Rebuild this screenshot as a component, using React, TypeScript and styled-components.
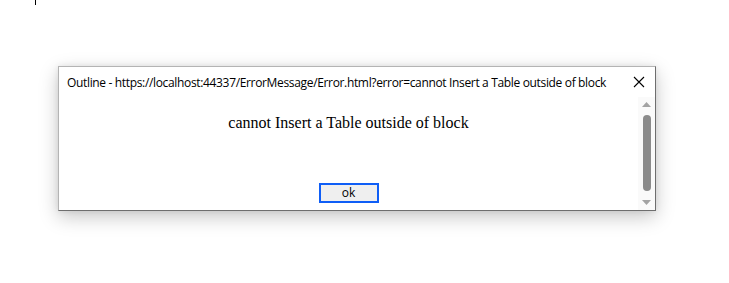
import styled, { createGlobalStyle } from 'styled-components'

const GlobalStyle = createGlobalStyle`
  html, body {
    margin: 0;
    padding: 0;
    background: #ffffff;
  }
`

const Page = styled.div({
  width: 729,
  height: 283,
  background: '#ffffff',
  display: 'flex',
  flexDirection: 'column',
})

const Caret = styled.div({
  marginLeft: 35,
  width: 1,
  height: 5,
  background: '#000000',
})

const Dialog = styled.div({
  marginTop: 61,
  marginLeft: 58,
  width: 598,
  height: 145,
  boxSizing: 'border-box',
  borderStyle: 'solid',
  borderWidth: 1,
  borderColor: '#b4b4b4 #6e6e6e #6e6e6e #b4b4b4',
  background: '#ffffff',
  boxShadow: '0 6px 18px rgba(0, 0, 0, 0.22), 0 0 6px rgba(0, 0, 0, 0.08)',
  display: 'flex',
  flexDirection: 'column',
})

const TitleBar = styled.div({
  height: 30,
  display: 'flex',
  alignItems: 'center',
  justifyContent: 'space-between',
  paddingLeft: 8,
  paddingRight: 10,
  fontFamily: '"Open Sans", "Noto Sans", sans-serif',
  fontSize: 12,
  color: '#000000',
  whiteSpace: 'nowrap',
})

const Title = styled.span({
  letterSpacing: -0.34,
})

const Close = styled.svg({
  width: 12,
  height: 12,
  flexShrink: 0,
})

const Body = styled.div({
  flex: 1,
  display: 'flex',
  minHeight: 0,
})

const Content = styled.div({
  flex: 1,
  display: 'flex',
  flexDirection: 'column',
  alignItems: 'center',
  paddingTop: 16,
})

const Message = styled.div({
  fontFamily: '"Liberation Serif", "Times New Roman", serif',
  fontSize: 16,
  color: '#000000',
  lineHeight: '20px',
})

const OkButton = styled.button({
  marginTop: 50,
  width: 60,
  height: 20,
  boxSizing: 'border-box',
  border: '2px solid #0f5ef6',
  background: '#efefef',
  fontFamily: '"Open Sans", "Noto Sans", sans-serif',
  fontSize: 12,
  lineHeight: '14px',
  color: '#000000',
  padding: 0,
})

const ScrollBar = styled.div({
  width: 17,
  background: '#fafafa',
  display: 'flex',
  flexDirection: 'column',
  alignItems: 'center',
})

const ArrowBox = styled.div({
  height: 15,
  width: '100%',
  display: 'flex',
  alignItems: 'center',
  justifyContent: 'center',
})

const Thumb = styled.div({
  marginTop: 3,
  width: 8,
  height: 76,
  borderRadius: 4,
  background: '#8b8b8b',
})

const Track = styled.div({
  flex: 1,
})

export default function App() {
  return (
    <Page>
      <GlobalStyle />
      <Caret />
      <Dialog>
        <TitleBar>
          <Title>Outline - https://localhost:44337/ErrorMessage/Error.html?error=cannot Insert a Table outside of block</Title>
          <Close viewBox="0 0 12 12">
            <path d="M1 1 L11 11 M11 1 L1 11" stroke="#000" strokeWidth="1.1" fill="none" />
          </Close>
        </TitleBar>
        <Body>
          <Content>
            <Message>cannot Insert a Table outside of block</Message>
            <OkButton>ok</OkButton>
          </Content>
          <ScrollBar>
            <ArrowBox>
              <svg width="9" height="5" viewBox="0 0 9 5">
                <path d="M0 5 L4.5 0 L9 5 Z" fill="#a3a3a3" />
              </svg>
            </ArrowBox>
            <Thumb />
            <Track />
            <ArrowBox>
              <svg width="9" height="5" viewBox="0 0 9 5">
                <path d="M0 0 L9 0 L4.5 5 Z" fill="#a3a3a3" />
              </svg>
            </ArrowBox>
          </ScrollBar>
        </Body>
      </Dialog>
    </Page>
  )
}
